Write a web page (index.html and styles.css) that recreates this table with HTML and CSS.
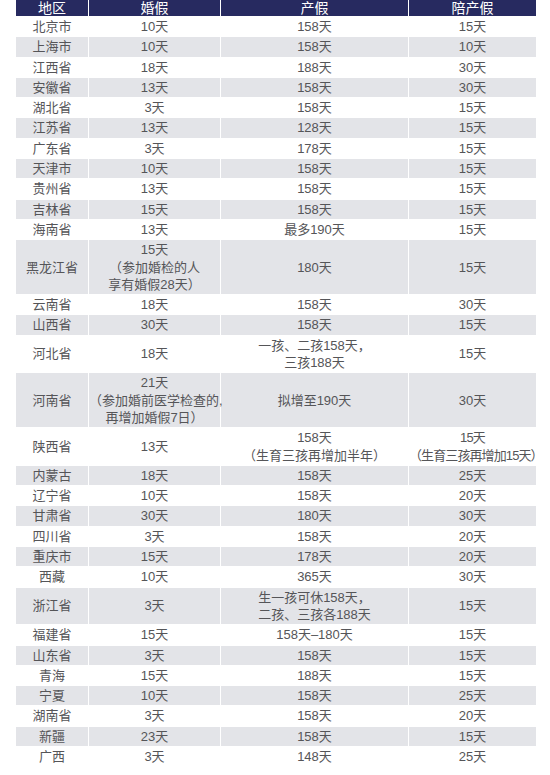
FILE: index.html
```html
<!DOCTYPE html>
<html lang="zh-CN">
<head>
<meta charset="utf-8">
<link rel="stylesheet" href="styles.css">
</head>
<body>
<table class="leave">
<colgroup>
<col class="c1"><col class="c2"><col class="c3"><col class="c4">
</colgroup>
<thead>
<tr><th>地区</th><th>婚假</th><th>产假</th><th>陪产假</th></tr>
</thead>
<tbody>
<tr><td>北京市</td><td>10天</td><td>158天</td><td>15天</td></tr>
<tr><td>上海市</td><td>10天</td><td>158天</td><td>10天</td></tr>
<tr><td>江西省</td><td>18天</td><td>188天</td><td>30天</td></tr>
<tr><td>安徽省</td><td>13天</td><td>158天</td><td>30天</td></tr>
<tr><td>湖北省</td><td>3天</td><td>158天</td><td>15天</td></tr>
<tr><td>江苏省</td><td>13天</td><td>128天</td><td>15天</td></tr>
<tr><td>广东省</td><td>3天</td><td>178天</td><td>15天</td></tr>
<tr><td>天津市</td><td>10天</td><td>158天</td><td>15天</td></tr>
<tr><td>贵州省</td><td>13天</td><td>158天</td><td>15天</td></tr>
<tr><td>吉林省</td><td>15天</td><td>158天</td><td>15天</td></tr>
<tr><td>海南省</td><td>13天</td><td>最多190天</td><td>15天</td></tr>
<tr class="tall3"><td>黑龙江省</td><td>15天<br>（参加婚检的人<br>享有婚假28天）</td><td>180天</td><td>15天</td></tr>
<tr><td>云南省</td><td>18天</td><td>158天</td><td>30天</td></tr>
<tr><td>山西省</td><td>30天</td><td>158天</td><td>15天</td></tr>
<tr><td>河北省</td><td>18天</td><td>一孩、二孩158天，<br>三孩188天</td><td>15天</td></tr>
<tr><td>河南省</td><td>21天<br>（参加婚前医学检查的,<br>再增加婚假7日）</td><td>拟增至190天</td><td>30天</td></tr>
<tr><td>陕西省</td><td>13天</td><td>158天<br>（生育三孩再增加半年）</td><td class="tight">15天<br>（生育三孩再增加15天）</td></tr>
<tr><td>内蒙古</td><td>18天</td><td>158天</td><td>25天</td></tr>
<tr><td>辽宁省</td><td>10天</td><td>158天</td><td>20天</td></tr>
<tr><td>甘肃省</td><td>30天</td><td>180天</td><td>30天</td></tr>
<tr><td>四川省</td><td>3天</td><td>158天</td><td>20天</td></tr>
<tr><td>重庆市</td><td>15天</td><td>178天</td><td>20天</td></tr>
<tr><td>西藏</td><td>10天</td><td>365天</td><td>30天</td></tr>
<tr><td>浙江省</td><td>3天</td><td>生一孩可休158天，<br>二孩、三孩各188天</td><td>15天</td></tr>
<tr><td>福建省</td><td>15天</td><td>158天–180天</td><td>15天</td></tr>
<tr><td>山东省</td><td>3天</td><td>158天</td><td>15天</td></tr>
<tr><td>青海</td><td>15天</td><td>188天</td><td>15天</td></tr>
<tr><td>宁夏</td><td>10天</td><td>158天</td><td>25天</td></tr>
<tr><td>湖南省</td><td>3天</td><td>158天</td><td>20天</td></tr>
<tr><td>新疆</td><td>23天</td><td>158天</td><td>15天</td></tr>
<tr><td>广西</td><td>3天</td><td>148天</td><td>25天</td></tr>
</tbody>
</table>
</body>
</html>
```

FILE: styles.css
```css
html, body {
  margin: 0;
  padding: 0;
  background: #ffffff;
}

body {
  font-family: "Liberation Sans", "Noto Sans CJK SC", sans-serif;
  color: #555558;
}

.leave {
  margin: 0 0 0 15px;
  width: 521px;
  table-layout: fixed;
  border-collapse: collapse;
}

.c1 { width: 73px; }
.c2 { width: 132px; }
.c3 { width: 188px; }
.c4 { width: 128px; }

.leave th {
  background: #272a60;
  color: #ffffff;
  font-weight: 400;
  font-size: 14px;
  line-height: 16px;
  height: 16px;
  padding: 0;
  border: 1px solid #ffffff;
  border-top: 0;
  text-align: center;
}

.leave td {
  font-size: 13px;
  line-height: 17.3px;
  padding: 1px 0;
  border: 1px solid #ffffff;
  text-align: center;
  vertical-align: middle;
  white-space: nowrap;
}

.leave tbody tr:nth-child(even) td {
  background: #e3e4e8;
}

.leave td.tight {
  letter-spacing: -0.9px;
}
```
